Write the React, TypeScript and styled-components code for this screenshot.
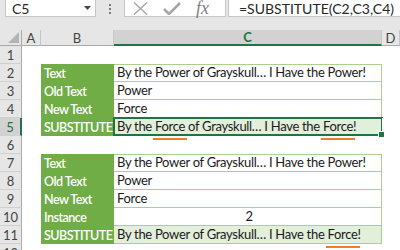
import React from 'react';
import styled, { createGlobalStyle, css } from 'styled-components';

const GlobalStyle = createGlobalStyle`
  html, body {
    margin: 0;
    padding: 0;
    background: #ffffff;
  }
  body {
    width: 400px;
    height: 250px;
    overflow: hidden;
    font-family: 'Lato', 'Open Sans', sans-serif;
  }
`;

const Window = styled.div`
  width: 400px;
  height: 250px;
  overflow: hidden;
  background: #ffffff;
`;

const FormulaBar = styled.div`
  display: flex;
  align-items: flex-start;
  height: 30px;
  background: #e6e6e6;
`;

const NameBox = styled.div`
  box-sizing: border-box;
  margin-left: 5px;
  width: 91px;
  height: 17px;
  padding: 0 4px 0 6px;
  display: flex;
  align-items: center;
  justify-content: space-between;
  background: #ffffff;
  border: 1px solid #c6c6c6;
  border-top: none;
  font-size: 14px;
  color: #262626;
`;

const Grip = styled.div`
  width: 28px;
  height: 17px;
  display: flex;
  flex-direction: column;
  align-items: center;
  justify-content: center;
  gap: 2px;

  span {
    width: 2px;
    height: 2px;
    background: #7a7a7a;
  }
`;

const IconBox = styled.div`
  box-sizing: border-box;
  width: 102px;
  height: 17px;
  display: flex;
  align-items: center;
  padding-left: 8px;
  gap: 15px;
  background: #ffffff;
  border: 1px solid #c6c6c6;
  border-top: none;
`;

const Fx = styled.span`
  display: block;
  height: 16px;
  font-family: 'Liberation Serif', serif;
  font-style: italic;
  font-size: 18px;
  line-height: 17px;
  color: #7f7f7f;
`;

const FormulaInput = styled.div`
  box-sizing: border-box;
  flex: 1;
  height: 17px;
  margin-left: 2px;
  padding-left: 10px;
  display: flex;
  align-items: center;
  background: #ffffff;
  border-left: 1px solid #c6c6c6;
  border-bottom: 1px solid #c6c6c6;
  font-size: 14px;
  color: #262626;
`;

const Sheet = styled.div`
  display: grid;
  grid-template-columns: 22px 19px 73px 268px 18px;
  grid-template-rows: 16px repeat(12, 18px);
`;

const Corner = styled.div`
  box-sizing: border-box;
  background: #e6e6e6;
  border-right: 1px solid #ababab;
  border-bottom: 1px solid #ababab;
  display: flex;
  align-items: flex-end;
  justify-content: flex-end;
  padding: 0 2px 2px 0;
`;

const ColHeader = styled.div<{ $selected?: boolean }>`
  box-sizing: border-box;
  background: #e6e6e6;
  border-right: 1px solid #c6c6c6;
  border-bottom: 1px solid #ababab;
  display: flex;
  align-items: center;
  justify-content: center;
  font-size: 13px;
  color: #444444;
  ${(p) =>
    p.$selected &&
    css`
      background: #d2d2d2;
      color: #217346;
      font-weight: 700;
      border-bottom: 2px solid #217346;
    `}
`;

const RowHeader = styled.div<{ $selected?: boolean }>`
  box-sizing: border-box;
  background: #e6e6e6;
  border-right: 1px solid #ababab;
  border-bottom: 1px solid #d0d0d0;
  display: flex;
  align-items: center;
  justify-content: center;
  font-size: 13px;
  color: #444444;
  ${(p) =>
    p.$selected &&
    css`
      background: #d2d2d2;
      color: #217346;
      border-right: 2px solid #217346;
    `}
`;

type Kind = 'blank' | 'label' | 'value' | 'result';

const Cell = styled.div<{ $kind?: Kind; $top?: boolean; $center?: boolean; $active?: boolean }>`
  box-sizing: border-box;
  position: relative;
  display: flex;
  align-items: flex-end;
  padding: 0 0 1px 3px;
  white-space: nowrap;
  font-size: 13px;
  letter-spacing: -0.3px;
  color: #1a1a1a;
  background: #ffffff;
  ${(p) => p.$center && css`justify-content: center;`}
  ${(p) =>
    p.$kind === 'label' &&
    css`
      background: #70ad47;
      color: #ffffff;
      font-size: 12.5px;
      font-weight: 600;
      letter-spacing: -0.5px;
    `}
  ${(p) =>
    (p.$kind === 'value' || p.$kind === 'result') &&
    css`
      border-right: 1px solid #a9d08e;
      border-bottom: 1px solid #a9d08e;
    `}
  ${(p) => p.$kind === 'result' && css`background: #e2efda;`}
  ${(p) => p.$top && css`border-top: 1px solid #a9d08e;`}
  ${(p) =>
    p.$active &&
    css`
      &::before {
        content: '';
        position: absolute;
        inset: -1px -2px -1px -1px;
        border: 2px solid #217346;
        pointer-events: none;
      }
      &::after {
        content: '';
        position: absolute;
        right: -4px;
        bottom: -3px;
        width: 5px;
        height: 5px;
        background: #217346;
        border: 1px solid #ffffff;
        z-index: 2;
      }
    `}
`;

const CellText = styled.span`
  display: inline-block;
`;

const Mark = styled.span`
  position: relative;

  &::after {
    content: '';
    position: absolute;
    left: -2px;
    right: -2px;
    bottom: -6px;
    height: 2px;
    background: #ed7d31;
    z-index: 3;
  }
`;

const cols = ['A', 'B', 'C', 'D'];

type Row = { label?: string; value?: React.ReactNode; kind?: Kind; top?: boolean; center?: boolean; active?: boolean };

const rows: Row[] = [
  {},
  { label: 'Text', value: 'By the Power of Grayskull… I Have the Power!', kind: 'value', top: true },
  { label: 'Old Text', value: 'Power', kind: 'value' },
  { label: 'New Text', value: 'Force', kind: 'value' },
  {
    label: 'SUBSTITUTE',
    kind: 'result',
    active: true,
    value: (
      <>
        By the <Mark>Force</Mark> of Grayskull… I Have the <Mark>Force</Mark>!
      </>
    ),
  },
  {},
  { label: 'Text', value: 'By the Power of Grayskull… I Have the Power!', kind: 'value', top: true },
  { label: 'Old Text', value: 'Power', kind: 'value' },
  { label: 'New Text', value: 'Force', kind: 'value' },
  { label: 'Instance', value: '2', kind: 'value', center: true },
  {
    label: 'SUBSTITUTE',
    kind: 'result',
    value: (
      <>
        By the Power of Grayskull… I Have the <Mark>Force</Mark>!
      </>
    ),
  },
  {},
];

export default function App() {
  return (
    <Window>
      <GlobalStyle />
      <FormulaBar>
        <NameBox>
          C5
          <svg width="7" height="4" viewBox="0 0 7 4">
            <path d="M0 0H7L3.5 4Z" fill="#444" />
          </svg>
        </NameBox>
        <Grip>
          <span />
          <span />
          <span />
        </Grip>
        <IconBox>
          <svg width="15" height="13" viewBox="0 0 15 13">
            <path d="M1 0.5L14 12.5M14 0.5L1 12.5" stroke="#a6a6a6" strokeWidth="1.4" fill="none" />
          </svg>
          <svg width="18" height="13" viewBox="0 0 18 13">
            <path d="M1 7L6 12L17 1" stroke="#a6a6a6" strokeWidth="2.6" fill="none" />
          </svg>
          <Fx>fx</Fx>
        </IconBox>
        <FormulaInput>=SUBSTITUTE(C2,C3,C4)</FormulaInput>
      </FormulaBar>
      <Sheet>
        <Corner>
          <svg width="11" height="11" viewBox="0 0 11 11">
            <path d="M11 0V11H0Z" fill="#b4b4b4" />
          </svg>
        </Corner>
        {cols.map((c) => (
          <ColHeader key={c} $selected={c === 'C'}>
            {c}
          </ColHeader>
        ))}
        {rows.map((r, i) => (
          <React.Fragment key={i}>
            <RowHeader $selected={i === 4}>{i + 1}</RowHeader>
            <Cell />
            <Cell $kind={r.label ? 'label' : 'blank'}>
              <CellText>{r.label}</CellText>
            </Cell>
            <Cell $kind={r.kind} $top={r.top} $center={r.center} $active={r.active}>
              <CellText>{r.value}</CellText>
            </Cell>
            <Cell />
          </React.Fragment>
        ))}
      </Sheet>
    </Window>
  );
}
